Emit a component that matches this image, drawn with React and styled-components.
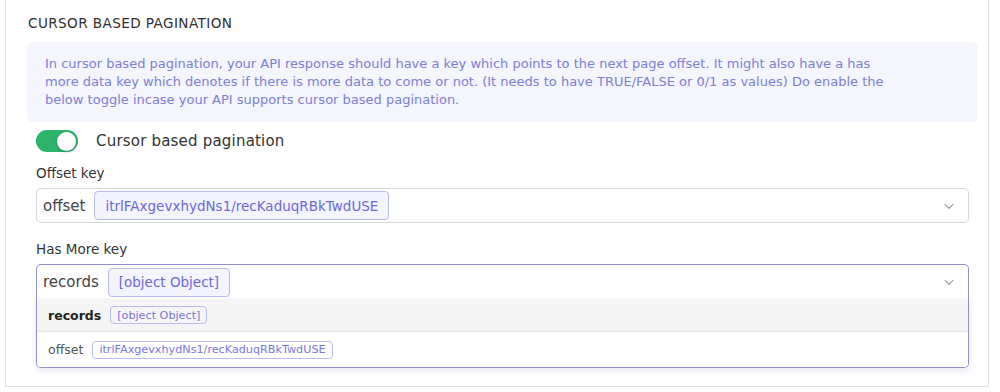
import React from "react";
import styled, { createGlobalStyle } from "styled-components";

const GlobalStyle = createGlobalStyle`
  * { box-sizing: border-box; }
  body {
    margin: 0;
    background: #fff;
    font-family: "DejaVu Sans", "Open Sans", sans-serif;
    color: #333;
  }
`;

const Chevron = () => (
  <svg width="14" height="14" viewBox="0 0 24 24" fill="none" stroke="#8a8f99" strokeWidth="1.8" strokeLinecap="round" strokeLinejoin="round">
    <path d="M5 9l7 7 7-7" />
  </svg>
);

const options = [
  { key: "records", value: "[object Object]" },
  { key: "offset", value: "itrlFAxgevxhydNs1/recKaduqRBkTwdUSE" },
];

export default function App() {
  return (
    <>
      <GlobalStyle />
      <Page>
        <Card>
          <Title>CURSOR BASED PAGINATION</Title>
          <InfoBox>
            In cursor based pagination, your API response should have a key which points to the next page offset. It might also have a has
            <br />
            more data key which denotes if there is more data to come or not. (It needs to have TRUE/FALSE or 0/1 as values) Do enable the
            <br />
            below toggle incase your API supports cursor based pagination.
          </InfoBox>
          <Fields>
            <ToggleRow>
              <Switch $on>
                <Knob />
              </Switch>
              <ToggleLabel>Cursor based pagination</ToggleLabel>
            </ToggleRow>

            <Field>
              <Label>Offset key</Label>
              <Select>
                <Value>
                  <KeyText>offset</KeyText>
                  <Chip>itrlFAxgevxhydNs1/recKaduqRBkTwdUSE</Chip>
                </Value>
                <Chevron />
              </Select>
            </Field>

            <Field>
              <Label>Has More key</Label>
              <Select $open>
                <Value>
                  <KeyText>records</KeyText>
                  <Chip>[object Object]</Chip>
                </Value>
                <Chevron />
              </Select>
              <Menu>
                {options.map((o, i) => (
                  <Option key={o.key} $selected={i === 0}>
                    <OptionKey $selected={i === 0}>{o.key}</OptionKey>
                    <SmallChip>{o.value}</SmallChip>
                  </Option>
                ))}
              </Menu>
            </Field>
          </Fields>
        </Card>
      </Page>
    </>
  );
}

const Page = styled.div`
  width: 1000px;
  height: 392px;
  overflow: hidden;
  padding: 0 11px 0 5px;
`;

const Card = styled.section`
  border: 1px solid #e2e2e2;
  border-top: none;
  padding: 12px 10px 1px 21px;
`;

const Title = styled.h3`
  margin: 0 0 8px 1px;
  font-size: 13.6px;
  font-weight: 400;
  letter-spacing: 0.4px;
  color: #2f2f2f;
  line-height: 22px;
`;

const InfoBox = styled.div`
  background: #f4f5fd;
  border-radius: 6px;
  padding: 13px 18px;
  font-size: 13px;
  line-height: 18px;
  color: #7c80d6;
  white-space: nowrap;
`;

const Fields = styled.div`
  padding: 8px 9px 0 9px;
  display: flex;
  flex-direction: column;
`;

const ToggleRow = styled.div`
  display: flex;
  align-items: center;
  gap: 18px;
  height: 22px;
  margin-bottom: 12px;
`;

const Switch = styled.div`
  width: 42px;
  height: 22px;
  border-radius: 11px;
  background: ${(p) => (p.$on ? "#2cb46b" : "#ccc")};
  display: flex;
  align-items: center;
  justify-content: ${(p) => (p.$on ? "flex-end" : "flex-start")};
  padding: 0 2px;
`;

const Knob = styled.span`
  width: 19px;
  height: 19px;
  border-radius: 50%;
  background: #fff;
  box-shadow: 0 1px 3px rgba(0, 0, 0, 0.25);
`;

const ToggleLabel = styled.span`
  font-size: 15px;
  color: #333;
  letter-spacing: 0.2px;
`;

const Field = styled.div`
  display: flex;
  flex-direction: column;
  margin-bottom: 17px;
`;

const Label = styled.label`
  font-size: 13.5px;
  color: #333;
  line-height: 18px;
  margin-bottom: 6px;
`;

const Select = styled.div`
  display: flex;
  align-items: center;
  justify-content: space-between;
  height: 35px;
  padding: 0 12px 0 6px;
  border: 1px solid ${(p) => (p.$open ? "#8c90c6" : "#d4d6da")};
  border-radius: ${(p) => (p.$open ? "5px 5px 0 0" : "5px")};
  border-bottom: ${(p) => (p.$open ? "none" : undefined)};
  background: #fff;
`;

const Value = styled.div`
  display: flex;
  align-items: center;
  gap: 9px;
`;

const KeyText = styled.span`
  font-size: 15px;
  color: #444;
`;

const Chip = styled.span`
  display: inline-flex;
  align-items: center;
  height: 29px;
  padding: 0 10px;
  border: 1px solid #b9bcef;
  border-radius: 4px;
  background: #f3f4fe;
  color: #6c68d8;
  font-size: 13.5px;
`;

const Menu = styled.div`
  border: 1px solid #8c90c6;
  border-top: none;
  border-radius: 0 0 5px 5px;
  box-shadow: 0 3px 6px rgba(80, 90, 170, 0.15);
  overflow: hidden;
`;

const Option = styled.div`
  display: flex;
  align-items: center;
  gap: 9px;
  height: ${(p) => (p.$selected ? "33px" : "35px")};
  padding: 0 11px;
  background: ${(p) => (p.$selected ? "#f5f5f5" : "#fff")};
  border-bottom: ${(p) => (p.$selected ? "1px solid #e6e6e6" : "none")};
`;

const OptionKey = styled.span`
  font-size: 12.5px;
  font-weight: ${(p) => (p.$selected ? 700 : 400)};
  color: ${(p) => (p.$selected ? "#222" : "#555")};
`;

const SmallChip = styled.span`
  display: inline-flex;
  align-items: center;
  height: 18px;
  padding: 0 6px;
  border: 1px solid #b9bcef;
  border-radius: 4px;
  color: #7a77dc;
  font-size: 11.2px;
`;
